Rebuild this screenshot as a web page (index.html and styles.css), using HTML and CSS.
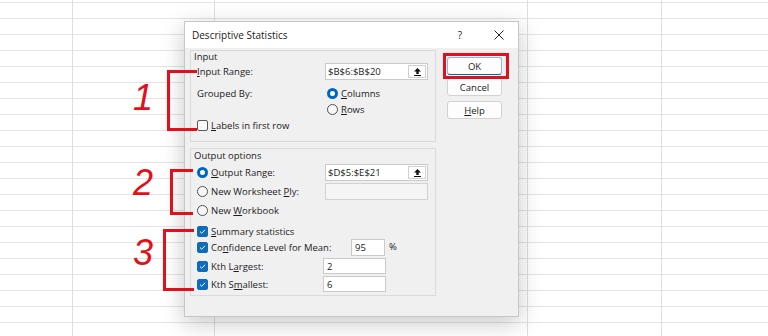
FILE: index.html
```html
<!DOCTYPE html>
<html>
  <head>
    <link rel="stylesheet" href="styles.css">
  </head>
  <body>
    <div class="sheet">
      <div class="dialog">
        <div class="titlebar">
          <span class="title">Descriptive Statistics</span>
          <span class="help-mark">?</span>
          <span class="close">
            <svg width="10" height="10" viewBox="0 0 10 10">
              <path d="M0.5 0.5 L9.5 9.5 M9.5 0.5 L0.5 9.5" stroke="#222" stroke-width="1" fill="none" />
            </svg>
          </span>
        </div>
        <div class="content">
          <div class="groups">
            <div class="group group-input">
              <div class="group-label">Input</div>
              <div class="row tall">
                <span class="label"><u>I</u>nput Range:</span>
                <div class="field ref">
                  <span class="value">$B$6:$B$20</span>
                  <span class="picker">
                    <svg width="7" height="8" viewBox="0 0 7 8">
                      <path d="M3.5 0 L0 3.6 H2.3 V6 H4.7 V3.6 H7 Z" fill="#111" />
                      <rect x="0" y="7" width="7" height="1" fill="#111" />
                    </svg>
                  </span>
                </div>
              </div>
              <div class="row gap-l">
                <span class="label">Grouped By:</span>
                <span class="option indent"><span class="radio on"></span><span><u>C</u>olumns</span></span>
              </div>
              <div class="row">
                <span class="label"></span>
                <span class="option indent"><span class="radio"></span><span><u>R</u>ows</span></span>
              </div>
              <div class="row">
                <span class="option"><span class="check"></span><span><u>L</u>abels in first row</span></span>
              </div>
            </div>

            <div class="group group-output">
              <div class="group-label wide">Output options</div>
              <div class="row tall gap-s">
                <span class="option label"><span class="radio on"></span><span><u>O</u>utput Range:</span></span>
                <div class="field ref">
                  <span class="value">$D$5:$E$21</span>
                  <span class="picker">
                    <svg width="7" height="8" viewBox="0 0 7 8">
                      <path d="M3.5 0 L0 3.6 H2.3 V6 H4.7 V3.6 H7 Z" fill="#111" />
                      <rect x="0" y="7" width="7" height="1" fill="#111" />
                    </svg>
                  </span>
                </div>
              </div>
              <div class="row tall gap-s">
                <span class="option label"><span class="radio"></span><span>New Worksheet <u>P</u>ly:</span></span>
                <div class="field ref disabled"></div>
              </div>
              <div class="row gap-s">
                <span class="option"><span class="radio"></span><span>New <u>W</u>orkbook</span></span>
              </div>
              <div class="row gap-l">
                <span class="option">
                  <span class="check on"><svg width="9" height="9" viewBox="0 0 9 9"><path d="M2 4.6 L3.7 6.2 L7.1 2.8" stroke="#fff" stroke-width="1" fill="none" /></svg></span>
                  <span><u>S</u>ummary statistics</span>
                </span>
              </div>
              <div class="row tall">
                <span class="option label-conf">
                  <span class="check on"><svg width="9" height="9" viewBox="0 0 9 9"><path d="M2 4.6 L3.7 6.2 L7.1 2.8" stroke="#fff" stroke-width="1" fill="none" /></svg></span>
                  <span>Co<u>n</u>fidence Level for Mean:</span>
                </span>
                <div class="field small">95</div>
                <span class="percent">%</span>
              </div>
              <div class="row gap-s">
                <span class="option label-kth">
                  <span class="check on"><svg width="9" height="9" viewBox="0 0 9 9"><path d="M2 4.6 L3.7 6.2 L7.1 2.8" stroke="#fff" stroke-width="1" fill="none" /></svg></span>
                  <span>Kth L<u>a</u>rgest:</span>
                </span>
                <div class="field kth">2</div>
              </div>
              <div class="row gap-s">
                <span class="option label-kth">
                  <span class="check on"><svg width="9" height="9" viewBox="0 0 9 9"><path d="M2 4.6 L3.7 6.2 L7.1 2.8" stroke="#fff" stroke-width="1" fill="none" /></svg></span>
                  <span>Kth S<u>m</u>allest:</span>
                </span>
                <div class="field kth">6</div>
              </div>
            </div>
          </div>

          <div class="buttons">
            <div class="btn default">OK</div>
            <div class="btn">Cancel</div>
            <div class="btn help"><span><u>H</u>elp</span></div>
          </div>
        </div>
      </div>

      <!-- annotations -->
      <div class="highlight"></div>
      <div class="bracket bracket-1"></div>
      <div class="bracket bracket-2"></div>
      <div class="bracket bracket-3"></div>
      <div class="num num-1">1</div>
      <div class="num num-2">2</div>
      <div class="num num-3">3</div>
    </div>
  </body>
</html>
```

FILE: styles.css
```css
* {
  box-sizing: border-box;
}

body {
  margin: 0;
  width: 768px;
  height: 336px;
  overflow: hidden;
  font-family: "Open Sans", "Noto Sans", sans-serif;
  font-size: 9.5px;
  color: #1b1b1b;
}

.sheet {
  position: relative;
  width: 768px;
  height: 336px;
  background-color: #fff;
  background-image:
    linear-gradient(#dedede, #dedede),
    linear-gradient(#dedede, #dedede),
    linear-gradient(#dedede, #dedede),
    linear-gradient(#dedede, #dedede),
    repeating-linear-gradient(to bottom, #e4e4e4 0 1px, transparent 1px 16px);
  background-size: 1px 100%, 1px 100%, 1px 100%, 1px 100%, 100% 100%;
  background-position: 72px 0, 214px 0, 527px 0, 661px 0, 0 2px;
  background-repeat: no-repeat, no-repeat, no-repeat, no-repeat, repeat;
}

/* dialog */

.dialog {
  position: absolute;
  left: 184px;
  top: 21px;
  width: 335px;
  height: 296px;
  background: #f0f0f0;
  border: 1px solid #c6c6c6;
  box-shadow: 0 6px 22px rgba(0, 0, 0, 0.22);
  display: flex;
  flex-direction: column;
}

.titlebar {
  height: 26px;
  flex: none;
  background: #fff;
  display: flex;
  align-items: center;
  padding: 0 13px 0 7px;
}

.title {
  flex: 1;
  font-size: 10px;
}

.help-mark {
  width: 12px;
  text-align: center;
  font-size: 10px;
  margin-right: 27px;
}

.close {
  width: 12px;
  display: flex;
  justify-content: center;
}

.content {
  display: flex;
  gap: 11px;
  padding: 2px 16px 0 5px;
}

.groups {
  width: 246px;
  display: flex;
  flex-direction: column;
  gap: 6px;
}

.group {
  border: 1px solid #dadada;
  padding-left: 6px;
}

.group-input {
  height: 92px;
}

.group-output {
  height: 148px;
}

.group-label {
  height: 12px;
  line-height: 12px;
  margin-left: -3px;
}

.group-label.wide {
  height: 13px;
  line-height: 13px;
}

.row {
  display: flex;
  align-items: center;
  height: 16px;
}

.row.tall {
  height: 17px;
}

.row.gap-s {
  margin-top: 2px;
}

.row.gap-l {
  margin-top: 5px;
}

.label {
  width: 128px;
  flex: none;
}

.label-conf {
  width: 154px;
  flex: none;
}

.label-kth {
  width: 126px;
  flex: none;
}

.option {
  display: flex;
  align-items: center;
  gap: 3px;
}

.option.indent {
  margin-left: 2px;
}

.radio {
  width: 11px;
  height: 11px;
  flex: none;
  border-radius: 50%;
  border: 1px solid #505050;
  background: #f8f8f8;
}

.radio.on {
  border: 3px solid #0067c0;
  background: #fff;
}

.check {
  width: 11px;
  height: 11px;
  flex: none;
  border-radius: 2px;
  border: 1px solid #5a5a5a;
  background: #fbfbfb;
  display: flex;
}

.check.on {
  background: #0f6cbd;
  border-color: #0f6cbd;
}

.field {
  height: 17px;
  border: 1px solid #cacaca;
  background: #fff;
  display: flex;
  align-items: center;
  padding-left: 3px;
}

.row:not(.tall) .field {
  height: 16px;
}

.field.ref {
  width: 103px;
  padding-left: 2px;
}

.field.disabled {
  background: #f5f5f5;
  border-color: #d2d2d2;
}

.field .value {
  flex: 1;
}

.picker {
  width: 18px;
  height: 13px;
  margin-right: 1px;
  border: 1px solid #d0d0d0;
  background: #fff;
  display: flex;
  align-items: center;
  justify-content: center;
}

.field.small {
  width: 34px;
}

.field.kth {
  width: 63px;
}

.percent {
  margin-left: 4px;
  margin-top: -3px;
}

/* buttons */

.buttons {
  width: 55px;
  display: flex;
  flex-direction: column;
  padding-top: 7px;
}

.btn {
  height: 18px;
  border: 1px solid #d2d2d2;
  border-radius: 3px;
  background: #fdfdfd;
  display: flex;
  align-items: center;
  justify-content: center;
  margin-top: 3px;
}

.btn.default {
  margin-top: 0;
  border-color: #8fb4e0;
  border-bottom-color: #0067c0;
}

.btn.help {
  margin-top: 5px;
}

/* red annotations */

.highlight {
  position: absolute;
  left: 443px;
  top: 53px;
  width: 66px;
  height: 26px;
  border: 3px solid #e3101b;
}

.bracket {
  position: absolute;
  border: 3px solid #e3101b;
  border-right: none;
}

.bracket-1 {
  left: 167px;
  top: 70px;
  width: 30px;
  height: 61px;
}

.bracket-2 {
  left: 170px;
  top: 169px;
  width: 23px;
  height: 46px;
}

.bracket-3 {
  left: 163px;
  top: 229px;
  width: 31px;
  height: 62px;
}

.num {
  position: absolute;
  left: 133px;
  font-family: "Liberation Sans", Arial, sans-serif;
  font-style: italic;
  font-size: 36px;
  line-height: 36px;
  color: #e3101b;
}

.num-1 {
  top: 80px;
}

.num-2 {
  top: 165px;
}

.num-3 {
  top: 235px;
}
```
